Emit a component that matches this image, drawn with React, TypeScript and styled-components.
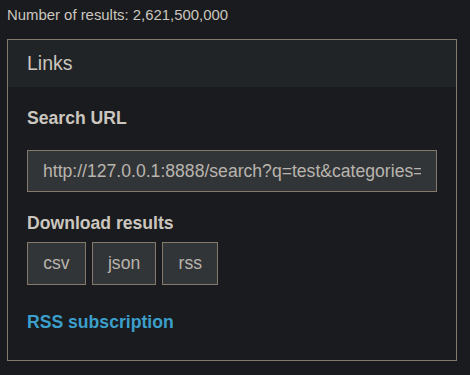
import styled, { createGlobalStyle } from 'styled-components';

const GlobalStyle = createGlobalStyle`
  html, body {
    margin: 0;
    background: #1a1b1e;
  }
  body {
    font-family: "Liberation Sans", Arial, sans-serif;
    color: #cbc6bf;
  }
`;

const Page = styled.div`
  padding: 6px 13px 14px 7px;
`;

const ResultCount = styled.div`
  font-size: 14.9px;
  line-height: 18px;
  margin-bottom: 15px;
`;

const Panel = styled.section`
  border: 1px solid #85796a;
`;

const PanelHeader = styled.div`
  background: #212426;
  height: 47px;
  display: flex;
  align-items: center;
  padding: 0 19px;
  font-size: 19.5px;
`;

const PanelBody = styled.div`
  padding: 20px 19px 27px;
  display: flex;
  flex-direction: column;
`;

const Label = styled.h4<{ $gap: number }>`
  margin: 0 0 ${(p) => p.$gap}px;
  font-size: 17.6px;
  line-height: 22px;
  font-weight: bold;
`;

const UrlInput = styled.input`
  box-sizing: border-box;
  width: 410px;
  height: 42px;
  margin-bottom: 20px;
  padding: 0 15px;
  background: #323538;
  border: 1px solid #85796a;
  color: #b9b4ad;
  font-family: "Liberation Sans", Arial, sans-serif;
  font-size: 17.6px;
  outline: none;
`;

const ButtonRow = styled.div`
  display: flex;
  gap: 6px;
  margin-bottom: 26px;
`;

const FormatButton = styled.button`
  box-sizing: border-box;
  height: 43px;
  padding: 0 15.2px;
  background: #323538;
  border: 1px solid #85796a;
  color: #b9b4ad;
  font-family: "Liberation Sans", Arial, sans-serif;
  font-size: 17.6px;
`;

const RssLink = styled.a`
  color: #3b9fcb;
  font-weight: bold;
  font-size: 17.6px;
  line-height: 22px;
  text-decoration: none;
`;

export default function App() {
  return (
    <Page>
      <GlobalStyle />
      <ResultCount>Number of results: 2,621,500,000</ResultCount>
      <Panel>
        <PanelHeader>Links</PanelHeader>
        <PanelBody>
          <Label $gap={21}>Search URL</Label>
          <UrlInput readOnly value="http://127.0.0.1:8888/search?q=test&categories=general" />
          <Label $gap={8}>Download results</Label>
          <ButtonRow>
            <FormatButton>csv</FormatButton>
            <FormatButton>json</FormatButton>
            <FormatButton>rss</FormatButton>
          </ButtonRow>
          <RssLink href="#">RSS subscription</RssLink>
        </PanelBody>
      </Panel>
    </Page>
  );
}
